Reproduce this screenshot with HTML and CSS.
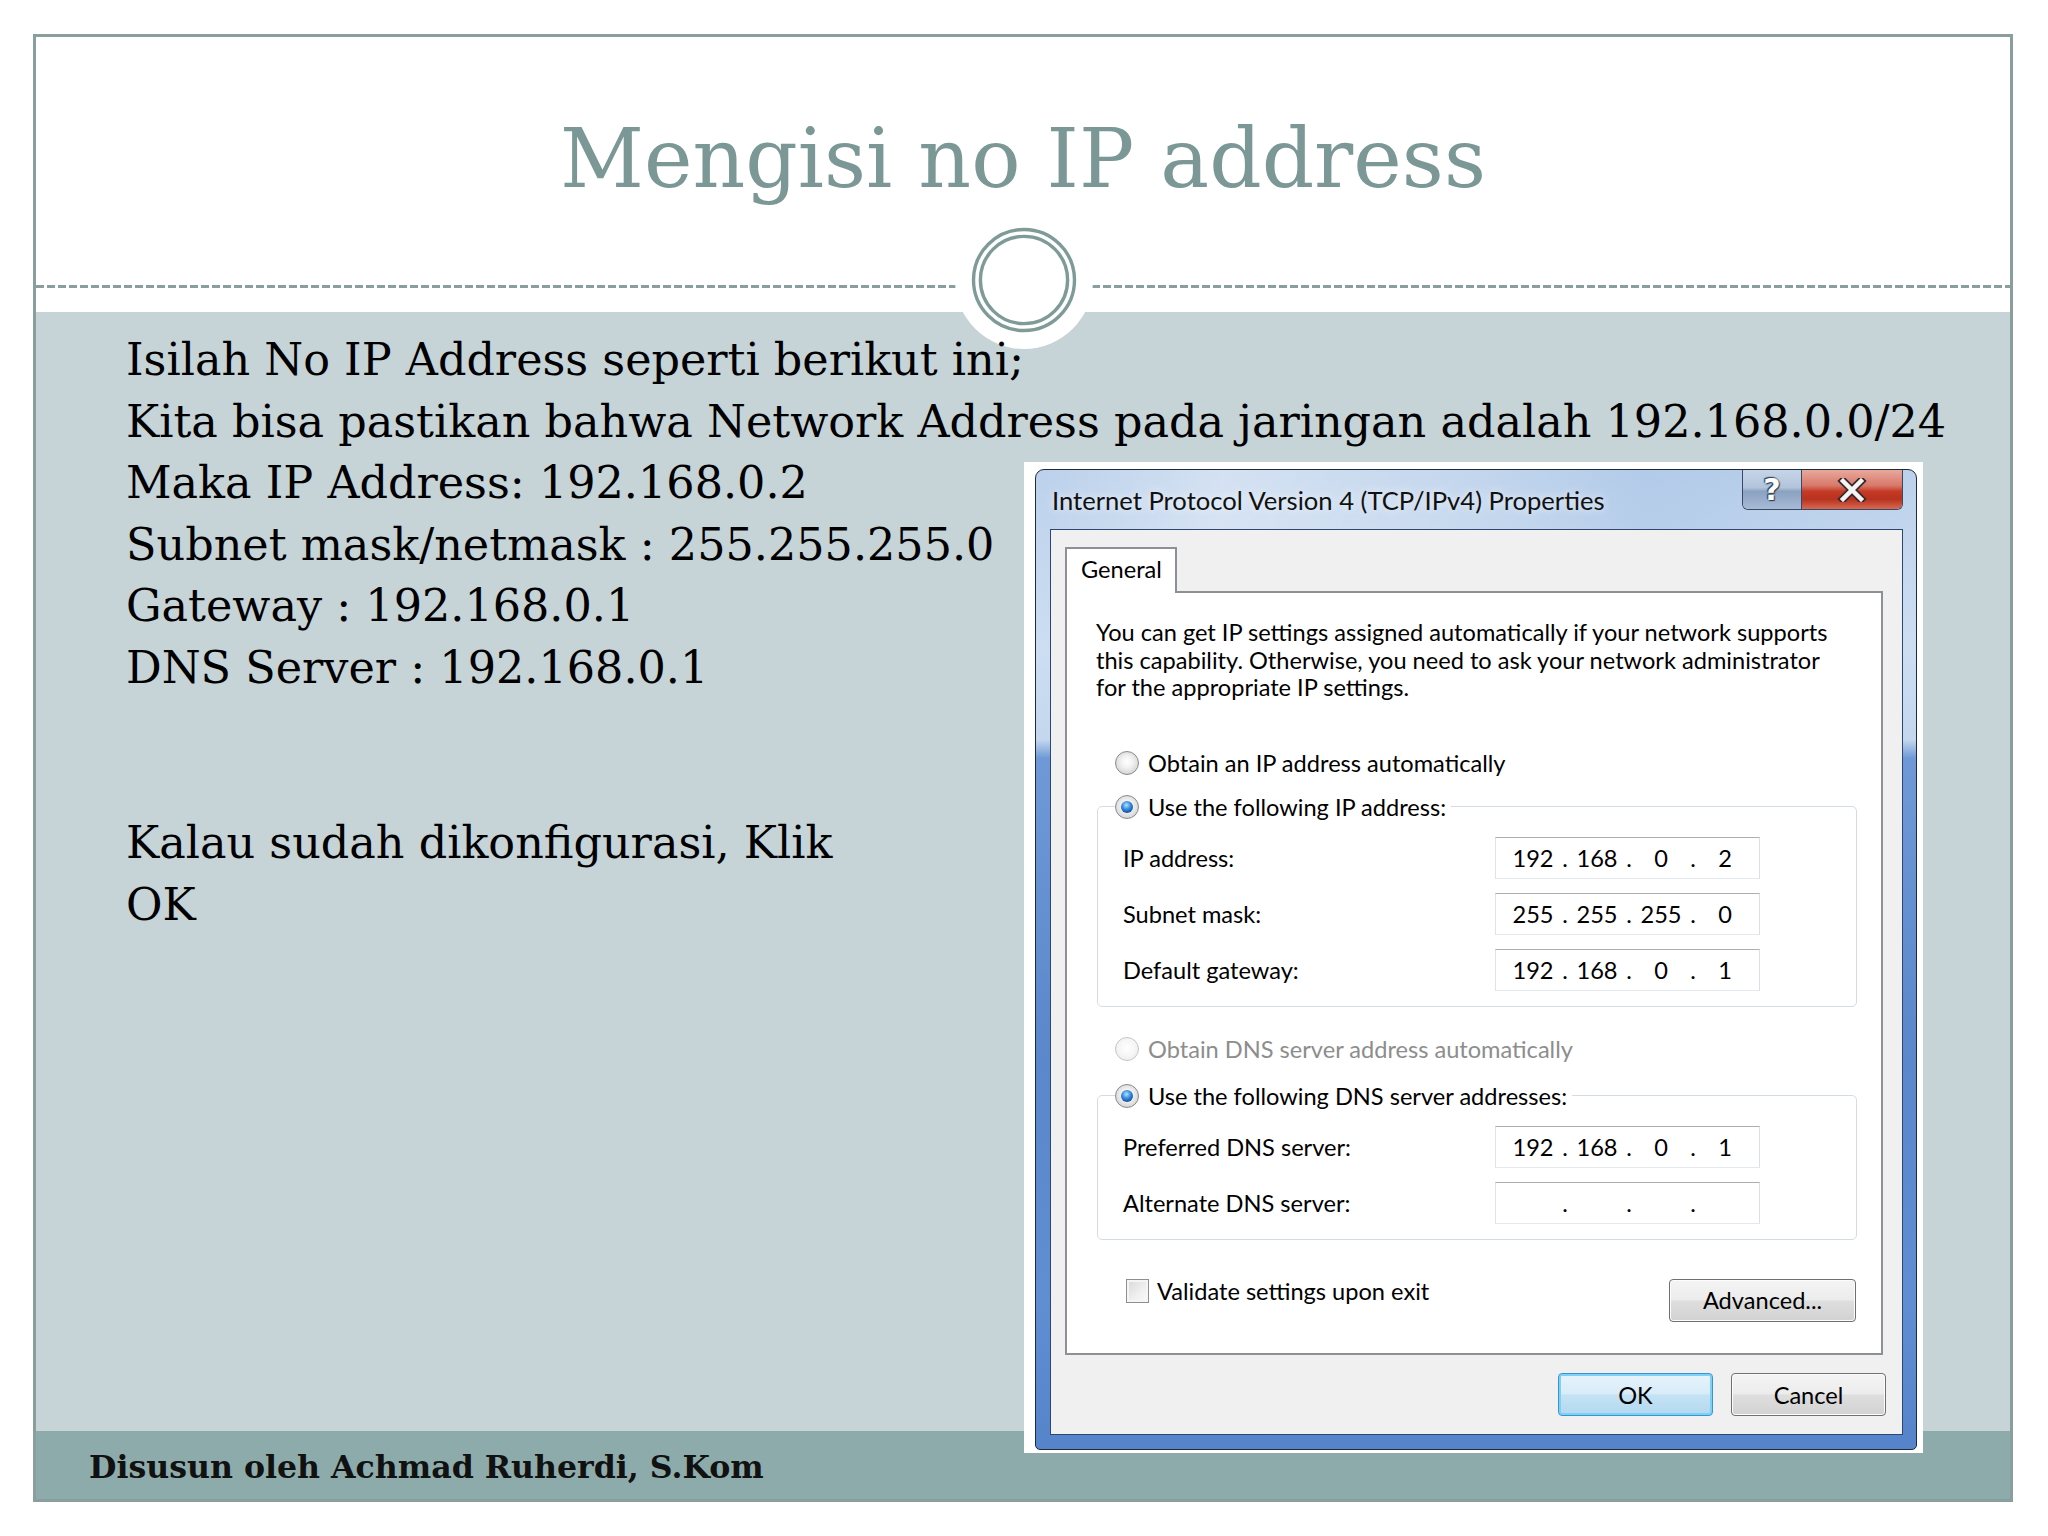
FILE: index.html
```html
<!DOCTYPE html>
<html lang="id">
<head>
<meta charset="utf-8">
<title>Mengisi no IP address</title>
<link rel="stylesheet" href="styles.css">
</head>
<body>
<div class="frame">
  <header class="head">
    <h1 class="title">Mengisi no IP address</h1>
    <div class="dash"></div>
  </header>
  <main class="content">
    <p>Isilah No IP Address seperti berikut ini;</p>
    <p>Kita bisa pastikan bahwa Network Address pada jaringan adalah 192.168.0.0/24</p>
    <p>Maka IP Address: 192.168.0.2</p>
    <p>Subnet mask/netmask : 255.255.255.0</p>
    <p>Gateway : 192.168.0.1</p>
    <p>DNS Server : 192.168.0.1</p>
    <p class="later">Kalau sudah dikonfigurasi, Klik<br>OK</p>
  </main>
  <footer class="foot">Disusun oleh Achmad Ruherdi, S.Kom</footer>

  <div class="emblem">
    <svg width="110" height="110" viewBox="0 0 110 110">
      <circle cx="55" cy="55" r="50.5" fill="none" stroke="#7e9b98" stroke-width="3.4"/>
      <circle cx="55" cy="55" r="43.6" fill="none" stroke="#7e9b98" stroke-width="3.4"/>
    </svg>
  </div>

  <div class="shot">
    <div class="win">
      <div class="tb">
        <span class="tb-title">Internet Protocol Version 4 (TCP/IPv4) Properties</span>
        <div class="caps">
          <div class="cap help">?</div>
          <div class="cap close">
            <svg width="30" height="24" viewBox="0 0 30 24">
              <path d="M6 3 L24 21 M24 3 L6 21" stroke="#3b2a2a" stroke-width="8" stroke-linecap="square"/>
              <path d="M6 3 L24 21 M24 3 L6 21" stroke="#f4f4f4" stroke-width="4.5" stroke-linecap="square"/>
            </svg>
          </div>
        </div>
      </div>
      <div class="client">
        <div class="tabs"><div class="tab">General</div></div>
        <div class="panel">
          <p class="desc">You can get IP settings assigned automatically if your network supports<br>this capability. Otherwise, you need to ask your network administrator<br>for the appropriate IP settings.</p>

          <div class="opt opt-first"><span class="radio"></span><span>Obtain an IP address automatically</span></div>

          <fieldset class="grp grp-ip">
            <legend class="opt"><span class="radio on"></span><span>Use the following IP address:</span></legend>
            <div class="frow"><span class="lbl">IP address:</span><div class="ip"><span class="seg">192</span><span class="dot">.</span><span class="seg">168</span><span class="dot">.</span><span class="seg">0</span><span class="dot">.</span><span class="seg">2</span></div></div>
            <div class="frow"><span class="lbl">Subnet mask:</span><div class="ip"><span class="seg">255</span><span class="dot">.</span><span class="seg">255</span><span class="dot">.</span><span class="seg">255</span><span class="dot">.</span><span class="seg">0</span></div></div>
            <div class="frow"><span class="lbl">Default gateway:</span><div class="ip"><span class="seg">192</span><span class="dot">.</span><span class="seg">168</span><span class="dot">.</span><span class="seg">0</span><span class="dot">.</span><span class="seg">1</span></div></div>
          </fieldset>

          <div class="opt opt-dis"><span class="radio dis"></span><span>Obtain DNS server address automatically</span></div>

          <fieldset class="grp grp-dns">
            <legend class="opt"><span class="radio on"></span><span>Use the following DNS server addresses:</span></legend>
            <div class="frow"><span class="lbl">Preferred DNS server:</span><div class="ip"><span class="seg">192</span><span class="dot">.</span><span class="seg">168</span><span class="dot">.</span><span class="seg">0</span><span class="dot">.</span><span class="seg">1</span></div></div>
            <div class="frow"><span class="lbl">Alternate DNS server:</span><div class="ip"><span class="seg"></span><span class="dot">.</span><span class="seg"></span><span class="dot">.</span><span class="seg"></span><span class="dot">.</span><span class="seg"></span></div></div>
          </fieldset>

          <div class="bottomrow">
            <div class="chk"><span class="box"></span><span>Validate settings upon exit</span></div>
            <div class="btn adv">Advanced...</div>
          </div>
        </div>
        <div class="btnrow">
          <div class="btn ok">OK</div>
          <div class="btn">Cancel</div>
        </div>
      </div>
    </div>
  </div>
</div>
</body>
</html>
```

FILE: styles.css
```css
* { box-sizing: border-box; }
html, body { margin: 0; padding: 0; background: #fff; }
body { width: 2048px; height: 1536px; overflow: hidden; }

.frame {
  position: relative;
  margin: 34px 0 0 33px;
  width: 1980px;
  height: 1468px;
  border: 3px solid #8a9f9d;
  display: flex;
  flex-direction: column;
}

.head { height: 275px; flex: none; background: #fff; display: flex; flex-direction: column; }
.title {
  margin: 0;
  padding-top: 81px;
  font-family: "DejaVu Serif", "Liberation Serif", serif;
  font-weight: normal;
  font-size: 82px;
  line-height: 82px;
  color: #7b9896;
  text-align: center;
}
.dash {
  height: 3px;
  margin-top: 85px;
  background: repeating-linear-gradient(to right, #8a9f9d 0 8px, transparent 8px 11px);
}

.content {
  flex: 1;
  background: #c6d3d7;
  padding: 17px 0 0 90px;
  font-family: "DejaVu Serif", "Liberation Serif", serif;
  font-size: 44.5px;
  line-height: 61.5px;
  color: #000;
}
.content p { margin: 0; position: relative; z-index: 1; }
.content .later { margin-top: 114px; }

.foot {
  height: 68px;
  flex: none;
  background: #8cabaa;
  padding: 3px 0 0 53px;
  font-family: "DejaVu Serif", "Liberation Serif", serif;
  font-weight: bold;
  font-size: 31.6px;
  line-height: 65px;
  color: #111;
}

.emblem {
  position: absolute;
  z-index: 0;
  left: 919px;
  top: 174px;
  width: 138px;
  height: 138px;
  border-radius: 50%;
  background: #fff;
  display: flex;
  align-items: center;
  justify-content: center;
}

/* ---------- dialog screenshot ---------- */
.shot {
  position: absolute;
  z-index: 2;
  left: 988px;
  top: 425px;
  width: 899px;
  height: 991px;
  background: #fff;
  padding: 7px 6px 3px 11px;
}
.win {
  width: 882px;
  height: 981px;
  border: 1px solid #1f2b3d;
  border-radius: 9px 9px 5px 5px;
  background: linear-gradient(to bottom, #bcd1eb 0, #cddef2 180px, #c3d7ee 270px, #6f99d6 288px, #5b87cb 60%, #5f8ed3 85%, #5584ca 100%);
  padding: 0 13px 14px 14px;
  display: flex;
  flex-direction: column;
  font-family: "Lato", "Noto Sans", sans-serif;
  font-size: 23.6px;
  color: #000;
}
.tb {
  height: 59px;
  flex: none;
  display: flex;
  align-items: flex-start;
  padding-left: 2px;
  background: linear-gradient(to right, rgba(255,255,255,0) 0, rgba(255,255,255,.35) 20%, rgba(255,255,255,.15) 45%, rgba(150,185,225,.25) 70%, rgba(255,255,255,0) 100%);
}
.tb-title {
  align-self: center;
  font-size: 25.6px;
  color: #111;
  text-shadow: 0 0 8px rgba(255,255,255,.9);
}
.caps {
  margin-left: auto;
  display: flex;
  height: 40px;
  border: 1px solid #3a4863;
  border-top: none;
  border-radius: 0 0 6px 6px;
  overflow: hidden;
}
.cap { display: flex; align-items: center; justify-content: center; height: 100%; }
.help {
  width: 59px;
  border-right: 1px solid #3a4863;
  background: linear-gradient(to bottom, #c6d5e8 0, #b2c4dc 45%, #8aa1c0 55%, #a7bbd6 100%);
  color: #fff;
  font-family: "DejaVu Sans", sans-serif;
  font-weight: bold;
  font-size: 30px;
  text-shadow: 0 0 2px #2e3c52, 1px 1px 1px #2e3c52, -1px -1px 1px #2e3c52;
}
.close {
  width: 100px;
  background: linear-gradient(to bottom, #e8a99c 0, #d8786a 40%, #c43a25 55%, #b8321f 75%, #d76a52 100%);
}

.client {
  flex: 1;
  background: #f0f0f0;
  border: 1px solid #2d4770;
  padding: 17px 19px 0 14px;
}
.tabs { display: flex; }
.tab {
  position: relative;
  z-index: 1;
  width: 112px;
  height: 46px;
  margin-bottom: -2px;
  border: 2px solid #8d9096;
  border-bottom: none;
  background: #fff;
  padding-left: 14px;
  line-height: 40px;
}
.panel {
  width: 818px;
  height: 764px;
  border: 2px solid #8d9096;
  background: #fff;
}
.desc { margin: 26px 0 0 29px; line-height: 27.5px; }

.opt { display: flex; align-items: center; gap: 9px; height: 30px; }
.opt-first { margin: 46px 0 0 48px; }
.opt-dis { margin: 27px 0 0 48px; color: #8d8d8d; }

.radio {
  flex: none;
  width: 24px;
  height: 24px;
  border-radius: 50%;
  border: 1px solid #8a8a8a;
  background: radial-gradient(circle at 50% 45%, #ffffff 0, #f2f2f2 35%, #d2d2d2 80%, #c4c4c4 100%);
  display: flex;
  align-items: center;
  justify-content: center;
}
.radio.on::after {
  content: "";
  width: 12px;
  height: 12px;
  border-radius: 50%;
  background: radial-gradient(circle at 45% 35%, #b4e3ff 0, #3a8ee0 40%, #11529f 75%, #0c3a75 100%);
}
.radio.dis { border-color: #c6c6c6; background: radial-gradient(circle at 50% 45%, #fff 0, #f6f6f6 50%, #e6e6e6 100%); }

.grp {
  margin: 0;
  width: 760px;
  border: 1px solid #d3dce3;
  border-radius: 5px;
  padding: 15px 0 15px 25px;
  min-inline-size: 0;
}
.grp-ip { margin: 14px 0 0 30px; }
.grp-dns { margin: 17px 0 0 30px; }
.grp legend { margin-left: -8px; padding: 0 5px 0 0; }

.frow { display: flex; align-items: center; height: 42px; }
.frow + .frow { margin-top: 14px; }
.lbl { width: 372px; flex: none; }
.ip {
  width: 265px;
  height: 42px;
  border: 1px solid;
  border-color: #abadb3 #dbdfe6 #e3e9ef #e2e3ea;
  background: #fff;
  display: flex;
  align-items: center;
  padding-left: 11px;
}
.seg { width: 52px; text-align: center; }
.dot { width: 12px; text-align: center; }

.bottomrow {
  display: flex;
  justify-content: space-between;
  align-items: flex-start;
  margin: 39px 25px 0 59px;
}
.chk { display: flex; align-items: center; gap: 8px; height: 24px; }
.box {
  width: 23px;
  height: 24px;
  border: 1px solid #8e8f8f;
  background: linear-gradient(135deg, #d8d8d8 0, #f0f0f0 60%, #fafafa 100%);
  box-shadow: inset 0 0 0 2px #f5f5f5;
}

.btn {
  height: 43px;
  border: 1px solid #707070;
  border-radius: 4px;
  background: linear-gradient(to bottom, #f4f4f4 0, #ececec 48%, #dedede 52%, #d2d2d2 100%);
  box-shadow: inset 0 0 0 1px #fcfcfc;
  display: flex;
  align-items: center;
  justify-content: center;
  width: 155px;
}
.adv { width: 187px; }
.btnrow {
  display: flex;
  justify-content: flex-end;
  gap: 18px;
  margin: 18px -3px 0 0;
}
.btn.ok {
  border-color: #3596d6;
  background: linear-gradient(to bottom, #e6f3fb 0, #d8ecf8 48%, #c4e2f4 52%, #b3d8ef 100%);
  box-shadow: inset 0 0 0 2px #7fd0f5;
}
```
